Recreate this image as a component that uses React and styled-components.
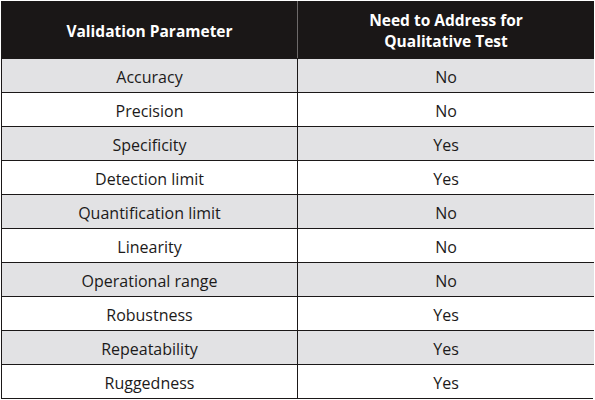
import React from "react";
import styled, { createGlobalStyle } from "styled-components";

const Global = createGlobalStyle`
  html, body { margin: 0; padding: 0; background: #ffffff; }
  body { font-family: "Open Sans", "Noto Sans", Arial, sans-serif; }
`;

const Table = styled.div`
  margin: 1px 0 0 1px;
  width: 592px;
  display: grid;
  grid-template-columns: 296px 296px;
  border-left: 1.5px solid #1b1818;
  border-right: 1.5px solid #1b1818;
  border-bottom: 1.5px solid #1b1818;
  box-sizing: border-box;
`;

const HeadCell = styled.div`
  height: 57px;
  background: #1a1717;
  color: #ffffff;
  font-weight: 700;
  font-size: 15.5px;
  line-height: 21px;
  display: flex;
  align-items: center;
  justify-content: center;
  text-align: center;
  box-sizing: border-box;
  padding-top: 3px;
  border-right: ${(p) => (p.$first ? "1px solid #6d6a6a" : "none")};
`;

const Cell = styled.div`
  height: 34px;
  background: ${(p) => (p.$shaded ? "#e2e2e4" : "#ffffff")};
  color: #1c1a1a;
  font-size: 16px;
  display: flex;
  align-items: center;
  justify-content: center;
  box-sizing: border-box;
  border-top: 1.5px solid #1b1818;
  border-right: ${(p) => (p.$first ? "1.5px solid #1b1818" : "none")};
  padding-top: 2px;
`;

const rows = [
  ["Accuracy", "No"],
  ["Precision", "No"],
  ["Specificity", "Yes"],
  ["Detection limit", "Yes"],
  ["Quantification limit", "No"],
  ["Linearity", "No"],
  ["Operational range", "No"],
  ["Robustness", "Yes"],
  ["Repeatability", "Yes"],
  ["Ruggedness", "Yes"],
];

export default function App() {
  return (
    <>
      <Global />
      <Table>
        <HeadCell $first>Validation Parameter</HeadCell>
        <HeadCell>
          Need to Address for
          <br />
          Qualitative Test
        </HeadCell>
        {rows.map(([a, b], i) => (
          <React.Fragment key={a}>
            <Cell $first $shaded={i % 2 === 0}>{a}</Cell>
            <Cell $shaded={i % 2 === 0}>{b}</Cell>
          </React.Fragment>
        ))}
      </Table>
    </>
  );
}
